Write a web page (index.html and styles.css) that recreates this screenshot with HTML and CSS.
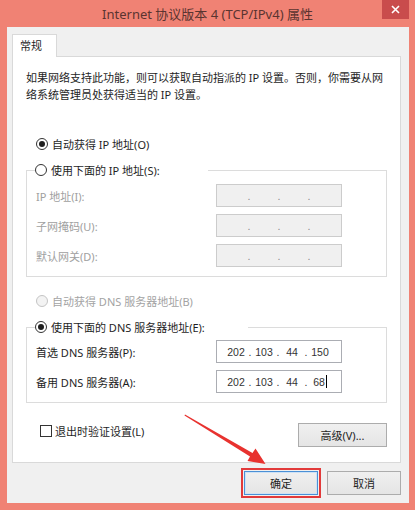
FILE: index.html
```html
<!DOCTYPE html>
<html lang="zh-CN">
<head>
    <meta charset="UTF-8">
    <meta name="viewport" content="width=device-width, initial-scale=1.0">
    <title>Internet 协议版本 4 (TCP/IPv4) 属性</title>
    <link rel="stylesheet" href="styles.css">
</head>
<body>
    <div class="window">
        <div class="titlebar">
            <span></span>
            <div class="title">Internet 协议版本 4 (TCP/IPv4) 属性</div>
            <div class="close">
                <svg width="9" height="9" viewBox="0 0 9 9"><path d="M1 1L8 8M8 1L1 8" stroke="#fff" stroke-width="1.6"/></svg>
            </div>
        </div>

        <div class="client">
            <div class="tabs"><div class="tab">常规</div></div>
            <div class="panel">
                <p class="desc">如果网络支持此功能，则可以获取自动指派的 IP 设置。否则，你需要从网<br>络系统管理员处获得适当的 IP 设置。</p>

                <div class="option first"><span class="radio on"></span>自动获得 IP 地址(O)</div>
                <fieldset class="group">
                    <legend class="option ip-legend"><span class="radio"></span>使用下面的 IP 地址(S):</legend>
                    <div class="rows">
                        <div class="row off">
                            <span class="label">IP 地址(I):</span>
                            <div class="ipbox"><span class="oct"></span><span class="dot">.</span><span class="oct"></span><span class="dot">.</span><span class="oct"></span><span class="dot">.</span><span class="oct"></span></div>
                        </div>
                        <div class="row off">
                            <span class="label">子网掩码(U):</span>
                            <div class="ipbox"><span class="oct"></span><span class="dot">.</span><span class="oct"></span><span class="dot">.</span><span class="oct"></span><span class="dot">.</span><span class="oct"></span></div>
                        </div>
                        <div class="row off">
                            <span class="label">默认网关(D):</span>
                            <div class="ipbox"><span class="oct"></span><span class="dot">.</span><span class="oct"></span><span class="dot">.</span><span class="oct"></span><span class="dot">.</span><span class="oct"></span></div>
                        </div>
                    </div>
                </fieldset>

                <div class="option off dns-auto"><span class="radio"></span>自动获得 DNS 服务器地址(B)</div>
                <fieldset class="group">
                    <legend class="option dns-legend"><span class="radio on"></span>使用下面的 DNS 服务器地址(E):</legend>
                    <div class="rows dns-rows">
                        <div class="row">
                            <span class="label">首选 DNS 服务器(P):</span>
                            <div class="ipbox filled"><span class="oct">202</span><span class="dot">.</span><span class="oct">103</span><span class="dot">.</span><span class="oct">44</span><span class="dot">.</span><span class="oct">150</span></div>
                        </div>
                        <div class="row">
                            <span class="label">备用 DNS 服务器(A):</span>
                            <div class="ipbox filled"><span class="oct">202</span><span class="dot">.</span><span class="oct">103</span><span class="dot">.</span><span class="oct">44</span><span class="dot">.</span><span class="oct">68<span class="caret"></span></span></div>
                        </div>
                    </div>
                </fieldset>

                <div class="panel-bottom">
                    <div class="check"><span class="box"></span>退出时验证设置(L)</div>
                    <button class="btn advanced">高级(V)...</button>
                </div>
            </div>

            <div class="footer">
                <div class="highlight"><button class="btn default">确定</button></div>
                <button class="btn">取消</button>
            </div>
        </div>

        <!-- annotation arrow pointing to the OK button -->
        <svg class="arrow" width="415" height="510" viewBox="0 0 415 510">
            <polygon points="185,414.5 252.5,453 255.5,448.5 265.5,464 247.5,461 250,456.5 184.5,415.5" fill="#e8322f"/>
        </svg>
    </div>
</body>
</html>
```

FILE: styles.css
```css
body {
    margin: 0;
    font-family: "Noto Sans", "Noto Sans CJK SC", sans-serif;
    font-size: 11px;
    color: #1e1e1e;
}
.window {
    position: relative;
    width: 415px;
    height: 510px;
    background-color: #f08274;
    display: flex;
    flex-direction: column;
    overflow: hidden;
}
.titlebar {
    height: 27px;
    display: grid;
    grid-template-columns: 1fr auto 1fr;
    align-items: center;
}
.title {
    font-size: 13px;
    color: #5a3430;
    padding-bottom: 1px;
}
.close {
    justify-self: end;
    align-self: start;
    width: 27px;
    height: 19px;
    margin-right: 6px;
    background-color: #c94c4c;
    display: flex;
    align-items: center;
    justify-content: center;
}
.client {
    flex: 1;
    margin: 0 6px 7px 7px;
    padding: 7px 8px 0 5px;
    background-color: #f0f0f0;
}
.tabs {
    display: flex;
}
.tab {
    position: relative;
    width: 45px;
    height: 23px;
    line-height: 22px;
    padding-left: 7px;
    box-sizing: border-box;
    background-color: #fff;
    border: 1px solid #d9d9d9;
    border-bottom: none;
    margin-bottom: -1px;
}
.panel {
    height: 407px;
    box-sizing: border-box;
    background-color: #fff;
    border: 1px solid #d9d9d9;
    padding: 12px 13px 0 13px;
}
.desc {
    margin: 0;
    line-height: 17px;
}
.option {
    display: flex;
    align-items: center;
    height: 18px;
    gap: 4px;
}
.option.first {
    margin: 32px 0 8px 10px;
}
.option.off {
    color: #a3a3a3;
}
.dns-auto {
    margin: 15px 0 8px 10px;
}
.radio {
    width: 12px;
    height: 12px;
    box-sizing: border-box;
    border: 1px solid #333;
    border-radius: 50%;
    background-color: #fff;
    display: flex;
    align-items: center;
    justify-content: center;
}
.radio.on::after {
    content: "";
    width: 6px;
    height: 6px;
    border-radius: 50%;
    background-color: #1e1e1e;
}
.option.off .radio {
    border-color: #c4c4c4;
    background-color: #f3f3f3;
}
.group {
    margin: 0;
    padding: 0 0 9px 0;
    border: 1px solid #dcdcdc;
}
.group legend {
    padding: 0;
    margin-left: 8px;
    box-sizing: border-box;
}
.ip-legend {
    width: 173px;
}
.dns-legend {
    width: 213px;
}
.rows {
    margin-top: 5px;
    display: flex;
    flex-direction: column;
    gap: 7px;
}
.dns-rows {
    margin-top: 4px;
}
.row {
    display: grid;
    grid-template-columns: 180px 126px;
    align-items: center;
    padding-left: 9px;
}
.row.off .label {
    color: #a0a0a0;
}
.ipbox {
    height: 23px;
    box-sizing: border-box;
    border: 1px solid #abadb3;
    background-color: #fff;
    display: flex;
    align-items: center;
    padding-left: 5px;
    font-family: "Liberation Sans", sans-serif;
    font-size: 10.5px;
    color: #333;
}
.ipbox.filled {
    padding-left: 7px;
}
.ipbox.filled .oct {
    width: 24px;
}
.ipbox.filled .dot {
    width: 4px;
}
.row.off .ipbox {
    background-color: #f0f0f0;
    border-color: #cccccc;
    color: #8a8a8a;
}
.oct {
    width: 24px;
    text-align: center;
}
.dot {
    width: 6px;
    text-align: center;
}
.caret {
    display: inline-block;
    width: 1px;
    height: 13px;
    margin-left: 1px;
    background-color: #000;
    vertical-align: -2px;
}
.panel-bottom {
    display: flex;
    justify-content: space-between;
    align-items: flex-start;
    margin-top: 19px;
}
.check {
    display: flex;
    align-items: center;
    gap: 3px;
    height: 18px;
    margin-left: 14px;
}
.check .box {
    width: 12px;
    height: 12px;
    box-sizing: border-box;
    border: 1px solid #333;
    background-color: #fff;
}
.btn {
    width: 74px;
    height: 24px;
    padding: 0;
    font-family: "Noto Sans", "Noto Sans CJK SC", sans-serif;
    font-size: 11px;
    color: #1e1e1e;
    border: 1px solid #acacac;
    background: linear-gradient(#f0f0f0, #e5e5e5);
}
.btn.advanced {
    width: 89px;
    margin-top: 1px;
}
.btn.default {
    border-color: #4a90d6;
    box-shadow: inset 0 0 0 1px #cfe2f5;
}
.footer {
    display: flex;
    justify-content: flex-end;
    align-items: center;
    gap: 6px;
    margin-top: 5px;
}
.highlight {
    border: 2px solid #e23a3a;
    padding: 1px;
    display: flex;
}
.arrow {
    position: absolute;
    left: 0;
    top: 0;
    pointer-events: none;
}
```
